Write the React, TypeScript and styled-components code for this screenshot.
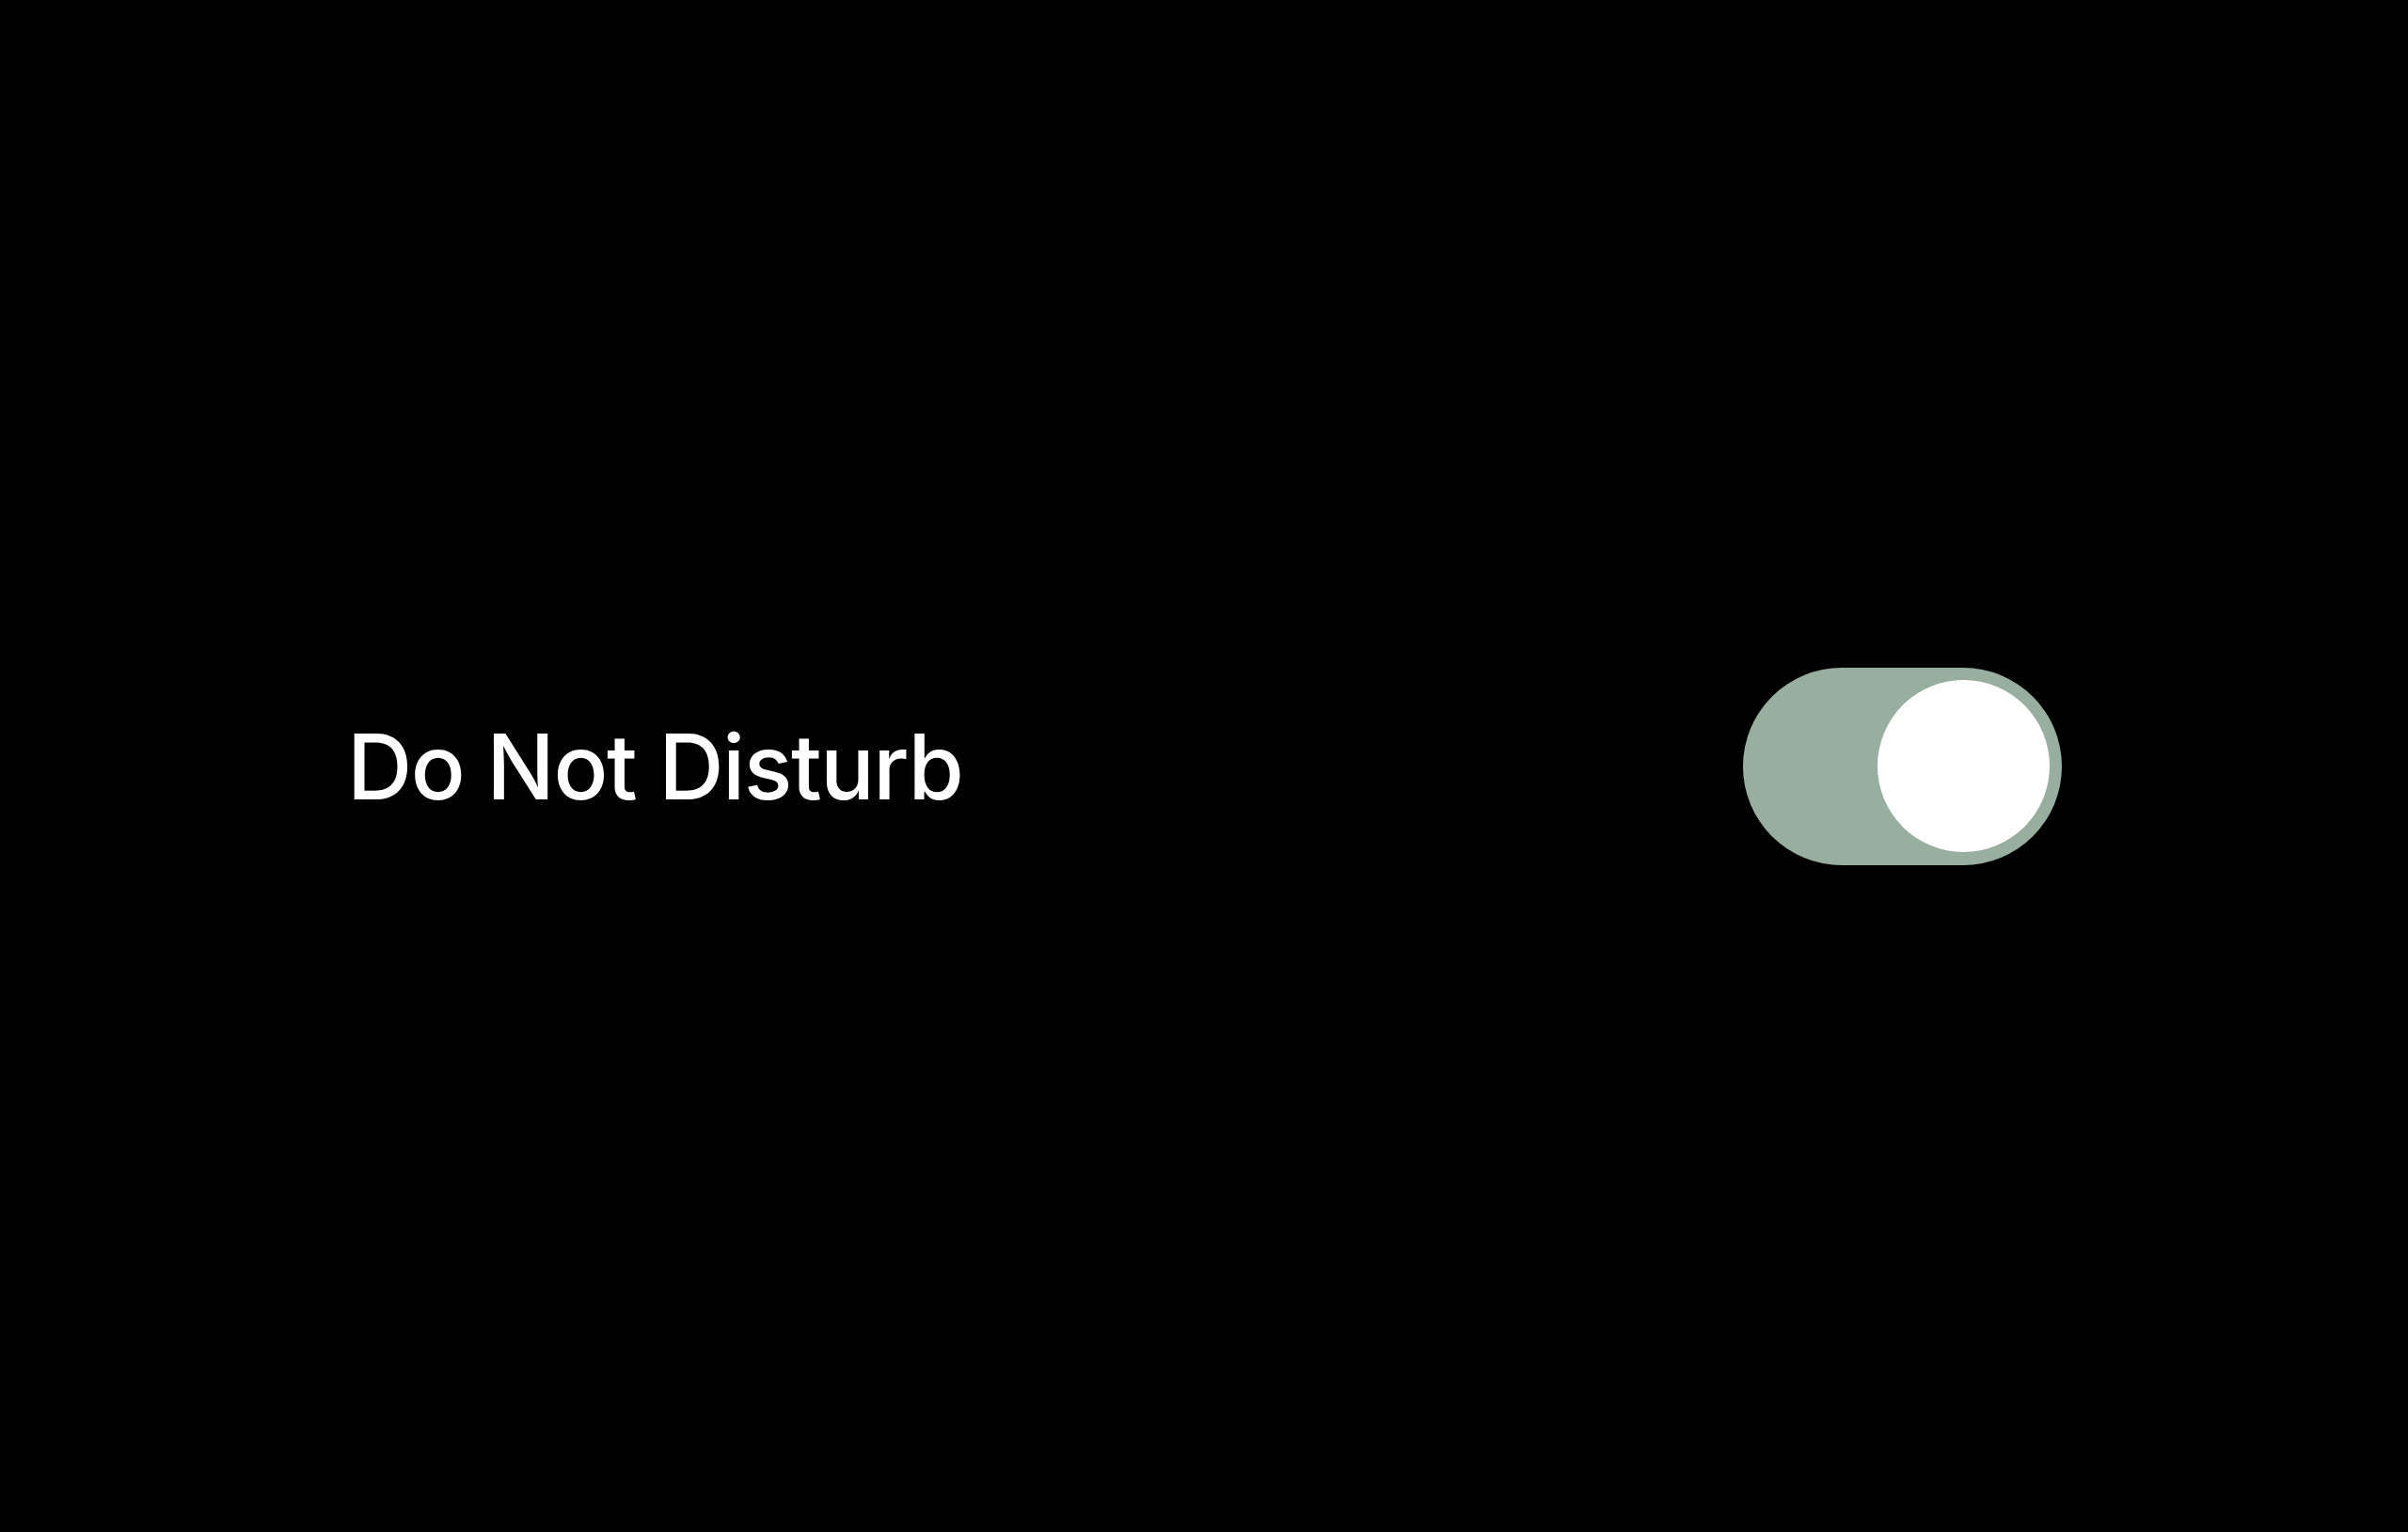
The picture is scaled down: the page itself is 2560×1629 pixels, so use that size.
import React, { useState } from "react";
import styled, { createGlobalStyle } from "styled-components";

const GlobalStyle = createGlobalStyle`
  html, body {
    margin: 0;
    padding: 0;
    background: #000000;
  }
  #root {
    min-height: 100vh;
  }
`;

const Page = styled.div`
  height: 100vh;
  display: flex;
  align-items: center;
  justify-content: space-between;
  padding: 0 368px 0 369px;
  box-sizing: border-box;
  background: #000000;
`;

const Label = styled.span`
  font-family: "Inter", "Noto Sans", sans-serif;
  font-size: 96px;
  font-weight: 500;
  color: #ffffff;
  line-height: 1;
  letter-spacing: -1.5px;
`;

const Track = styled.button<{ $on: boolean }>`
  width: 339px;
  height: 210px;
  border-radius: 105px;
  border: none;
  padding: 0 13px;
  display: flex;
  align-items: center;
  justify-content: ${(p) => (p.$on ? "flex-end" : "flex-start")};
  background: ${(p) => (p.$on ? "#98ae9f" : "#3a3a3c")};
  cursor: pointer;
  box-sizing: border-box;
`;

const Knob = styled.span`
  width: 183px;
  height: 183px;
  border-radius: 50%;
  background: #ffffff;
  display: block;
`;

export default function App() {
  const [on, setOn] = useState(true);

  return (
    <>
      <GlobalStyle />
      <Page>
        <Label>Do Not Disturb</Label>
        <Track $on={on} onClick={() => setOn(!on)} aria-pressed={on}>
          <Knob />
        </Track>
      </Page>
    </>
  );
}
